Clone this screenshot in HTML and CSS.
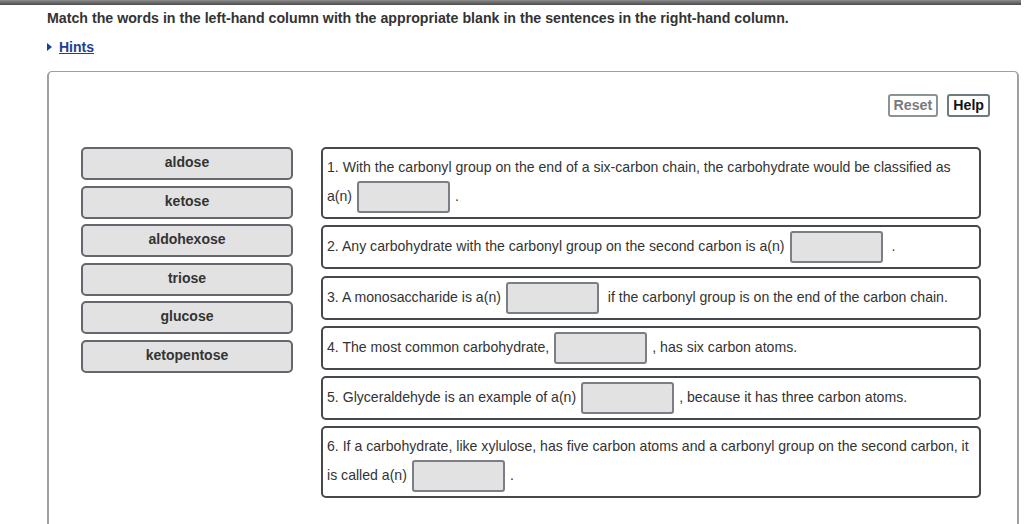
FILE: index.html
```html
<!DOCTYPE html>
<html lang="en">
<head>
    <meta charset="UTF-8">
    <title>Match the words</title>
    <link rel="stylesheet" href="styles.css">
</head>
<body>
    <div class="topbar"></div>

    <div class="content">
        <p class="instructions">Match the words in the left-hand column with the appropriate blank in the sentences in the right-hand column.</p>

        <div class="hints">
            <svg class="hints-arrow" width="5" height="8" viewBox="0 0 5 8"><path d="M0 0 L5 4 L0 8 Z" fill="#1c3f95"/></svg>
            <a href="#" class="hints-link">Hints</a>
        </div>

        <div class="panel">
            <div class="toolbar">
                <button class="tool-btn reset">Reset</button>
                <button class="tool-btn help">Help</button>
            </div>

            <div class="matching">
                <!-- word bank -->
                <div class="word-bank">
                    <div class="word">aldose</div>
                    <div class="word">ketose</div>
                    <div class="word">aldohexose</div>
                    <div class="word">triose</div>
                    <div class="word">glucose</div>
                    <div class="word">ketopentose</div>
                </div>

                <!-- sentences with blanks -->
                <div class="sentences">
                    <div class="sentence">1. With the carbonyl group on the end of a six-carbon chain, the carbohydrate would be classified as a(n)<span class="blank"></span>.</div>
                    <div class="sentence">2. Any carbohydrate with the carbonyl group on the second carbon is a(n)<span class="blank"></span> .</div>
                    <div class="sentence">3. A monosaccharide is a(n)<span class="blank"></span> if the carbonyl group is on the end of the carbon chain.</div>
                    <div class="sentence">4. The most common carbohydrate,<span class="blank"></span>, has six carbon atoms.</div>
                    <div class="sentence">5. Glyceraldehyde is an example of a(n)<span class="blank"></span>, because it has three carbon atoms.</div>
                    <div class="sentence">6. If a carbohydrate, like xylulose, has five carbon atoms and a carbonyl group on the second carbon, it is called a(n)<span class="blank"></span>.</div>
                </div>
            </div>
        </div>
    </div>
</body>
</html>
```

FILE: styles.css
```css
* {
    box-sizing: border-box;
}

body {
    margin: 0;
    font-family: "Liberation Sans", Arial, sans-serif;
    color: #333333;
    background: #FFFFFF;
    overflow: hidden;
}

.topbar {
    height: 5px;
    margin-right: 3px;
    background: linear-gradient(#8c8c8c, #4a4a4a);
}

.content {
    padding: 0 5px 0 47px;
}

.instructions {
    margin: 3px 0 0;
    font-size: 14.2px;
    font-weight: bold;
    line-height: 20px;
}

.hints {
    margin-top: 9px;
    display: flex;
    align-items: center;
    gap: 7px;
    height: 20px;
}

.hints-link {
    color: #1c3f95;
    font-size: 14px;
    font-weight: bold;
}

.panel {
    margin-top: 14px;
    min-height: 500px;
    border: 1px solid #a0a0a0;
    border-left-width: 2px;
    border-right-width: 2px;
    border-radius: 5px;
    padding: 22px 27px 0 32px;
}

.toolbar {
    display: flex;
    justify-content: flex-end;
    gap: 9px;
}

.tool-btn {
    height: 23px;
    padding: 0 4px;
    border: 2px solid #6e7b7e;
    border-radius: 3px;
    background: #FFFFFF;
    font-family: inherit;
    font-size: 14.2px;
    font-weight: bold;
    line-height: 19px;
}

.tool-btn.reset {
    color: #7a7a7a;
    border-color: #8a9496;
}

.tool-btn.help {
    color: #111111;
}

.matching {
    margin-top: 30px;
    display: flex;
    gap: 28px;
}

.word-bank {
    width: 212px;
    display: flex;
    flex-direction: column;
    gap: 5.6px;
}

.word {
    height: 33px;
    border: 2px solid #66666e;
    border-radius: 5px;
    background: #e2e2e2;
    text-align: center;
    font-size: 14px;
    font-weight: bold;
    line-height: 27px;
}

.sentences {
    width: 660px;
    display: flex;
    flex-direction: column;
    gap: 6.3px;
}

.sentence {
    border: 2px solid #45484d;
    border-radius: 5px;
    padding: 4px 3px 4px 4px;
    font-size: 14.1px;
    line-height: 28px;
}

.blank {
    display: inline-block;
    width: 93px;
    height: 32px;
    margin: 0 5px;
    border: 2px solid #7b7f85;
    border-radius: 3px;
    background: #e2e2e2;
    vertical-align: middle;
}
```
